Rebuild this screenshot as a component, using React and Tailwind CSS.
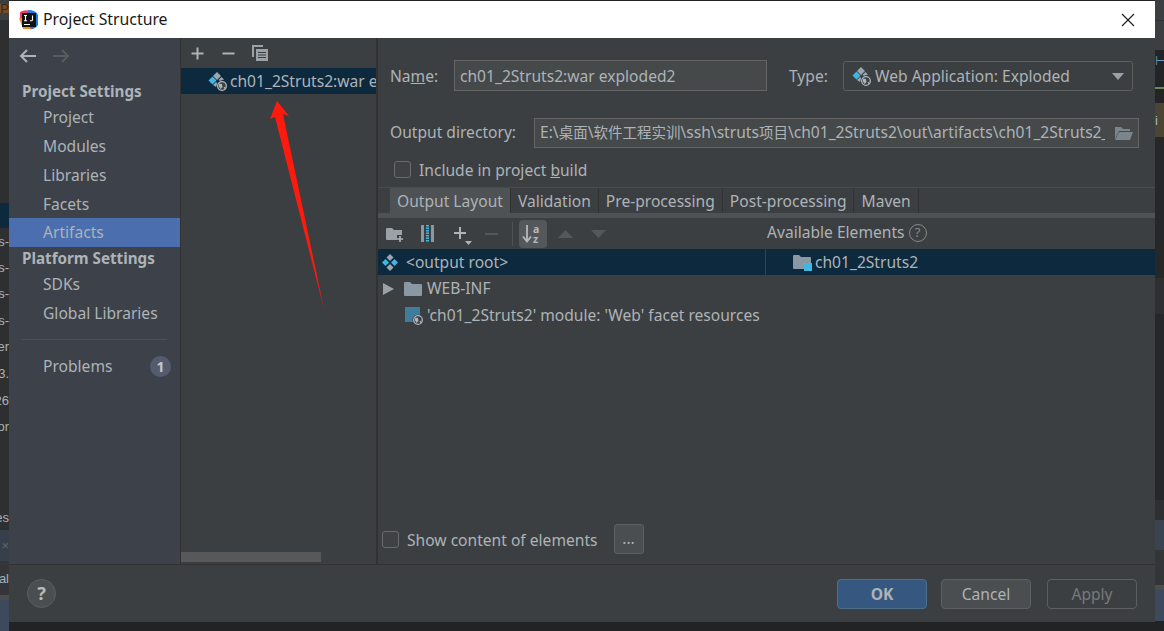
const leftStrip = [
  { h: 'h-[4px]', bg: 'bg-[#3c3f41]' },
  { h: 'h-[9px]', bg: 'bg-[#7a4a22]', text: 'P', tone: 'text-[#2b2b2b]' },
  { h: 'h-[7px]', bg: 'bg-[#3c3f41]' },
  { h: 'h-[183px]', bg: 'bg-[#2e2f30]' },
  { h: 'h-[25px]', bg: 'bg-[#0d293e]' },
  { h: 'h-[26px]', bg: 'bg-[#2e2f30]', text: 's-' },
  { h: 'h-[26px]', bg: 'bg-[#2e2f30]', text: 's-' },
  { h: 'h-[27px]', bg: 'bg-[#2e2f30]', text: 's-' },
  { h: 'h-[26px]', bg: 'bg-[#2e2f30]', text: 's-' },
  { h: 'h-[27px]', bg: 'bg-[#2e2f30]', text: 'er' },
  { h: 'h-[27px]', bg: 'bg-[#2e2f30]', text: '3.' },
  { h: 'h-[26px]', bg: 'bg-[#2e2f30]', text: '26' },
  { h: 'h-[26px]', bg: 'bg-[#2e2f30]', text: 'or' },
  { h: 'h-[65px]', bg: 'bg-[#2e2f30]' },
  { h: 'h-[26px]', bg: 'bg-[#2e2f30]', text: 'es' },
  { h: 'h-[31px]', bg: 'bg-[#37404a]', text: '×', tone: 'text-[#5d6670]' },
  { h: 'h-[34px]', bg: 'bg-[#333537]', text: 'al' },
  { h: 'h-[5px]', bg: 'bg-[#4a4c4e]' },
  { h: 'h-[32px]', bg: 'bg-[#3d4a5e]' },
  { h: 'h-[11px]', bg: 'bg-[#222324]' },
]

const rightStrip = [
  { h: 'h-[20px]', bg: 'bg-[#3c3f41]' },
  { h: 'h-[1px]', bg: 'bg-[#323232]' },
  { h: 'h-[29px]', bg: 'bg-[#3c3f41]' },
  { h: 'h-[20px]', bg: 'bg-[#232425]', text: '⊢', tone: 'text-[#6f97b8]' },
  { h: 'h-[17px]', bg: 'bg-[#232425]' },
  { h: 'h-[2px]', bg: 'bg-[#6a8759]' },
  { h: 'h-[14px]', bg: 'bg-[#232425]' },
  { h: 'h-[34px]', bg: 'bg-[#4a4535]', text: 'i', tone: 'text-[#a9b7c6]' },
  { h: 'h-[141px]', bg: 'bg-[#262728]' },
  { h: 'h-[36px]', bg: 'bg-[#2e2f30]' },
  { h: 'h-[186px]', bg: 'bg-[#262728]' },
  { h: 'h-[20px]', bg: 'bg-[#2e2f30]' },
  { h: 'h-[30px]', bg: 'bg-[#3a4350]' },
  { h: 'h-[35px]', bg: 'bg-[#333537]' },
  { h: 'h-[5px]', bg: 'bg-[#4a4c4e]' },
  { h: 'h-[31px]', bg: 'bg-[#3d4a5e]' },
  { h: 'h-[10px]', bg: 'bg-[#222324]' },
]

function Strip({ rows, align = 'justify-end' }) {
  return (
    <div className="w-[9px] shrink-0 overflow-hidden font-['Liberation_Sans',sans-serif] text-[13px]">
      {rows.map((row, i) => (
        <div key={i} className={`${row.h} ${row.bg} ${row.tone || 'text-[#a9b1b8]'} ${align} flex items-center whitespace-nowrap leading-none`}>
          {row.text}
        </div>
      ))}
    </div>
  )
}

function IdeaLogo() {
  return (
    <svg width="20" height="20" viewBox="0 0 20 20">
      <path d="M1 2 Q6 -1 11 1 L9 10 L1 9 Z" fill="#f0386b" />
      <path d="M9 0 Q17 0 19 5 L19 15 Q16 20 10 19 Z" fill="#1f7fe0" />
      <path d="M0 8 L5 8 L12 19 L4 19 Z" fill="#f58a1f" />
      <rect x="3" y="3" width="14" height="14" fill="#111" />
      <rect x="5" y="14" width="6" height="1" fill="#fff" />
      <path d="M5 5.5h3M6.5 5.5v5.2M5 10.7h3M13.5 5.5v4.2q0 1-1.2 1h-1.4" stroke="#fff" strokeWidth="1.1" fill="none" />
    </svg>
  )
}

function ArtifactIcon() {
  return (
    <svg width="18" height="18" viewBox="0 0 18 18" className="shrink-0">
      <path d="M4.5 5 L8 8.5 L4.5 12 L1 8.5 Z" fill="#40b6e0" />
      <path d="M9 0 L12.5 3.5 L9 7 L5.5 3.5 Z" fill="#9aa7b0" />
      <path d="M13.5 5 L17 8.5 L13.5 12 L10 8.5 Z" fill="#40b6e0" />
      <path d="M9 10 L12.5 13.5 L9 17 L5.5 13.5 Z" fill="#9aa7b0" />
    </svg>
  )
}

function Globe({ x = 0, y = 0 }) {
  return (
    <g transform={`translate(${x} ${y})`}>
      <circle cx="5" cy="5" r="5.5" fill="#3c3f41" />
      <circle cx="5" cy="5" r="4.3" fill="none" stroke="#aab4bb" strokeWidth="1.3" />
      <path d="M2 2.5 L5 3 L5.5 6 L3.5 8 L2 5.5 Z M6.5 6.5 L8.5 5.5 L7.5 8.5 Z" fill="#aab4bb" />
    </g>
  )
}

function WebArtifactIcon() {
  return (
    <svg width="20" height="20" viewBox="0 0 20 20" className="shrink-0">
      <path d="M4.5 4.5 L8.5 8.5 L4.5 12.5 L0.5 8.5 Z" fill="#40b6e0" />
      <path d="M9 0 L13 4 L9 8 L5 4 Z" fill="#9aa7b0" />
      <path d="M13.5 5 L16 7.5 L12 9 L10.5 8 Z" fill="#9aa7b0" />
      <path d="M8 10 L10 12 L8 15 L5 13 Z" fill="#9aa7b0" />
      <Globe x={9} y={9} />
    </svg>
  )
}

function FolderIcon({ className = '' }) {
  return (
    <svg width="18" height="14" viewBox="0 0 18 14" className={className}>
      <path d="M0 1 Q0 0 1 0 H6 L8 2 H17 Q18 2 18 3 V13 Q18 14 17 14 H1 Q0 14 0 13 Z" fill="#8a98a3" />
    </svg>
  )
}

function Check() {
  return <div className="w-[17px] h-[17px] shrink-0 rounded-[3px] border border-[#6b6b6b] bg-[#3f4244]" />
}

function SideItem({ label, active }) {
  return (
    <div className={`h-[28.75px] pl-[34px] pt-[1.5px] flex items-center ${active ? 'bg-[#4b6eaf]' : ''}`}>{label}</div>
  )
}

function SideHeader({ label, className = '' }) {
  return <div className={`pl-[13px] flex items-center font-bold text-[15.2px] ${className}`}>{label}</div>
}

function TabItem({ label, active }) {
  return (
    <div className={`h-[25px] px-[7px] pt-[2px] flex items-center border-r border-[#323232] ${active ? 'bg-[#4e5254]' : ''}`}>{label}</div>
  )
}

function Button({ label, className = '' }) {
  return (
    <div className={`w-[90px] h-[30px] pt-[3px] rounded-[4px] border flex items-center justify-center ${className}`}>{label}</div>
  )
}

export default function App() {
  return (
    <div className="relative w-[1164px] h-[631px] overflow-hidden flex bg-[#222324] font-['Noto_Sans','Noto_Sans_CJK_SC',sans-serif] text-[15.6px] text-[#adb3b7]">
      <Strip rows={leftStrip} />

      <div className="w-[1146px] shrink-0 mt-px h-[621px] flex flex-col bg-[#3c3f41]">
        {/* title bar */}
        <div className="h-[37px] shrink-0 bg-white text-[#1a1a1a] flex items-center pl-[10px] pr-[20px]">
          <IdeaLogo />
          <span className="ml-[4px] text-[15.8px]">Project Structure</span>
          <svg width="14" height="14" viewBox="0 0 14 14" className="ml-auto">
            <path d="M1 1 L13 13 M13 1 L1 13" stroke="#1a1a1a" strokeWidth="1.1" />
          </svg>
        </div>

        <div className="flex-1 flex min-h-0">
          {/* sidebar */}
          <div className="w-[171px] shrink-0 bg-[#3d4149] flex flex-col">
            <div className="h-[36px] pl-[10px] pt-[9px] flex gap-[15px] items-start">
              <svg width="18" height="18" viewBox="0 0 18 18">
                <path d="M17 9 H2 M8 3 L2 9 L8 15" stroke="#adb3b7" strokeWidth="2" fill="none" />
              </svg>
              <svg width="18" height="18" viewBox="0 0 18 18">
                <path d="M1 9 H16 M10 3 L16 9 L10 15" stroke="#5a5d60" strokeWidth="2" fill="none" />
              </svg>
            </div>
            <SideHeader label="Project Settings" className="h-[29px] pt-[5px]" />
            <SideItem label="Project" />
            <SideItem label="Modules" />
            <SideItem label="Libraries" />
            <SideItem label="Facets" />
            <SideItem label="Artifacts" active />
            <SideHeader label="Platform Settings" className="h-[23px]" />
            <SideItem label="SDKs" />
            <SideItem label="Global Libraries" />
            <div className="mt-[12px] mx-[13px] h-px bg-[#4c4f54]" />
            <div className="mt-[12px] h-[29px] pl-[34px] pr-[9px] flex items-center justify-between">
              <span>Problems</span>
              <span className="w-[21px] h-[21px] rounded-full bg-[#555b6e] text-[#c5c9cc] font-bold flex items-center justify-center text-[14px]">1</span>
            </div>
          </div>

          {/* artifact list */}
          <div className="w-[197px] shrink-0 border-x border-[#323232] flex flex-col">
            <div className="h-[30px] shrink-0 pl-[9px] flex items-center gap-[16px]">
              <svg width="15" height="15" viewBox="0 0 15 15">
                <path d="M7.5 1.5 V13.5 M1.5 7.5 H13.5" stroke="#adb3b7" strokeWidth="2" />
              </svg>
              <svg width="15" height="15" viewBox="0 0 15 15">
                <path d="M1.5 7.5 H13.5" stroke="#adb3b7" strokeWidth="2" />
              </svg>
              <svg width="17" height="17" viewBox="0 0 17 17">
                <path d="M1 12 V1 H11" stroke="#9aa2a8" strokeWidth="2" fill="none" />
                <rect x="4" y="4" width="12" height="12" fill="#9aa2a8" />
                <path d="M6 7.5 H14 M6 10 H14 M6 12.5 H14" stroke="#3c3f41" strokeWidth="1" />
              </svg>
            </div>
            <div className="h-[26px] shrink-0 bg-[#0d293e] pl-[27px] pt-[2px] flex items-center overflow-hidden whitespace-nowrap">
              <WebArtifactIcon />
              <span className="ml-[2px]">ch01_2Struts2:war exploded2</span>
            </div>
            <div className="flex-1" />
            <div className="h-[10px] w-[140px] bg-[#565859] mb-[2px]" />
          </div>

          {/* artifact form */}
          <div className="flex-1 min-w-0 border-l border-[#323232] flex flex-col">
            <div className="mt-[22px] pl-[12px] pt-[2px] flex items-center h-[31px]">
              <span className="w-[64px]">Na<span className="underline">m</span>e:</span>
              <div className="w-[313px] h-[31px] -mt-[2px] pt-[2px] bg-[#45494a] border border-[#646464] pl-[5px] flex items-center">ch01_2Struts2:war exploded2</div>
              <span className="ml-[22px] w-[54px]">Type:</span>
              <div className="w-[290px] h-[30px] -mt-[2px] pt-[2px] rounded-[3px] bg-[#3c3f41] border border-[#5e6060] pl-[8px] pr-[8px] flex items-center">
                <WebArtifactIcon />
                <span className="ml-[3px]">Web Application: Exploded</span>
                <svg width="12" height="8" viewBox="0 0 12 8" className="ml-auto">
                  <path d="M0 0 H12 L6 7 Z" fill="#9aa2a8" />
                </svg>
              </div>
            </div>

            <div className="mt-[27px] pl-[12px] flex items-center h-[30px]">
              <span className="w-[144px]">Output directory:</span>
              <div className="w-[605px] h-[30px] bg-[#45494a] border border-[#646464] pl-[5px] pr-[5px] flex items-center">
                <span className="flex-1 min-w-0 overflow-hidden whitespace-nowrap">E:\<span className="text-[14.5px]">桌面</span>\<span className="text-[14.5px]">软件工程实训</span>\ssh\struts<span className="text-[14.5px]">项目</span>\ch01_2Struts2\out\artifacts\ch01_2Struts2_war_exploded2</span>
                <svg width="18" height="14" viewBox="0 0 18 14" className="ml-[10px] shrink-0">
                  <path d="M0 13 V1 H6 L8 3 H15 V5 H4 Z" fill="#7a858c" />
                  <path d="M4 6 H18 L15 14 H0 Z" fill="#7a858c" />
                </svg>
              </div>
            </div>

            <div className="mt-[13px] pl-[16px] flex items-center gap-[8px] h-[17px]">
              <Check />
              <span className="pt-[2px]">Include in project <span className="underline">b</span>uild</span>
            </div>

            <div className="mt-[9px] border-t border-[#484a4c] pl-[12px] flex">
              <TabItem label="Output Layout" active />
              <TabItem label="Validation" />
              <TabItem label="Pre-processing" />
              <TabItem label="Post-processing" />
              <TabItem label="Maven" />
            </div>
            <div className="h-[5px] shrink-0 bg-[#4e5254]" />

            {/* output layout tree */}
            <div className="flex-1 flex min-h-0">
              <div className="w-[387px] shrink-0 flex flex-col">
                <div className="h-[31px] shrink-0 pl-[8px] flex items-center">
                  <svg width="18" height="16" viewBox="0 0 18 16">
                    <path d="M0 3 Q0 2 1 2 H6 L8 4 H16 V9 H11 V14 H1 Q0 14 0 13 Z" fill="#9aa2a8" />
                    <path d="M14 10 V16 M11 13 H17" stroke="#adb3b7" strokeWidth="1.6" />
                  </svg>
                  <svg width="13" height="17" viewBox="0 0 13 17" className="ml-[17px]">
                    <rect width="3" height="17" fill="#8a98a3" />
                    <rect x="10" width="3" height="17" fill="#8a98a3" />
                    <path d="M6.5 0 V17" stroke="#40b6e0" strokeWidth="3" strokeDasharray="1.5 1" />
                  </svg>
                  <svg width="22" height="20" viewBox="0 0 22 20" className="ml-[18px] mt-[3px]">
                    <path d="M8 2 V14 M2 8 H14" stroke="#adb3b7" strokeWidth="2" />
                    <path d="M13 16 H20 L16.5 20 Z" fill="#adb3b7" />
                  </svg>
                  <svg width="13" height="4" viewBox="0 0 13 4" className="ml-[11px]">
                    <path d="M0 2 H13" stroke="#55585a" strokeWidth="2" />
                  </svg>
                  <div className="ml-[14px] w-px h-[24px] bg-[#505355]" />
                  <div className="ml-[6px] w-[28px] h-[28px] rounded-[4px] bg-[#54585b] flex items-center justify-center">
                    <svg width="22" height="20" viewBox="0 0 22 20">
                      <path d="M5 1 V17 M1 12.5 L5 17.5 L9 12.5" stroke="#b4babe" strokeWidth="1.8" fill="none" />
                      <text x="11" y="8.5" fill="#b4babe" fontSize="10.5" fontWeight="700">a</text>
                      <text x="11" y="18.5" fill="#b4babe" fontSize="10.5" fontWeight="700">z</text>
                    </svg>
                  </div>
                  <svg width="15" height="8" viewBox="0 0 15 8" className="ml-[11px]">
                    <path d="M0 8 H15 L7.5 0 Z" fill="#55585a" />
                  </svg>
                  <svg width="15" height="8" viewBox="0 0 15 8" className="ml-[18px]">
                    <path d="M0 0 H15 L7.5 8 Z" fill="#55585a" />
                  </svg>
                </div>
                <div className="h-[26px] shrink-0 bg-[#0d293e] pl-[3px] pt-[2px] flex items-center">
                  <ArtifactIcon />
                  <span className="ml-[7px]">&lt;output root&gt;</span>
                </div>
                <div className="h-[27px] shrink-0 pl-[5px] flex items-center">
                  <svg width="11" height="12" viewBox="0 0 11 12">
                    <path d="M0 0 L11 6 L0 12 Z" fill="#9aa2a8" />
                  </svg>
                  <FolderIcon className="ml-[10px]" />
                  <span className="ml-[5px]">WEB-INF</span>
                </div>
                <div className="h-[26px] shrink-0 pl-[27px] pt-[2px] flex items-center">
                  <svg width="18" height="18" viewBox="0 0 18 18">
                    <rect width="15" height="15" fill="#3f7d9c" />
                    <Globe x={8} y={8} />
                  </svg>
                  <span className="ml-[4px]">'ch01_2Struts2' module: 'Web' facet resources</span>
                </div>
              </div>

              <div className="flex-1 min-w-0 flex flex-col">
                <div className="h-[31px] shrink-0 pl-[2px] pb-[2px] flex items-center gap-[4px]">
                  <span>Available Elements</span>
                  <span className="w-[18px] h-[18px] rounded-full border border-[#85898c] text-[#85898c] text-[13px] flex items-center justify-center">?</span>
                </div>
                <div className="h-[26px] shrink-0 bg-[#0d293e] border-l border-[#3c3f41] pl-[27px] pt-[2px] flex items-center">
                  <div className="relative w-[19px] h-[16px]">
                    <FolderIcon />
                    <div className="absolute right-0 bottom-0 w-[8px] h-[8px] bg-[#40b6e0]" />
                  </div>
                  <span className="ml-[3px]">ch01_2Struts2</span>
                </div>
              </div>
            </div>

            <div className="h-[30px] shrink-0 mb-[10px] pl-[4px] flex items-center">
              <Check />
              <span className="ml-[8px] pt-[3px]">Show content of elements</span>
              <div className="ml-[16px] w-[30px] h-[30px] rounded-[3px] bg-[#4a4e50] border border-[#5e6060] flex items-center justify-center">...</div>
            </div>
          </div>
        </div>

        {/* footer */}
        <div className="h-[58px] shrink-0 border-t border-[#323232] pl-[18px] pr-[18px] flex items-center">
          <div className="w-[29px] h-[29px] rounded-full bg-[#4a4e50] border border-[#5a5e60] text-[#b4babe] font-bold text-[18px] flex items-center justify-center">?</div>
          <Button label="OK" className="ml-auto bg-[#365880] border-[#4c708c] font-bold" />
          <Button label="Cancel" className="ml-[14px] bg-[#4a4e50] border-[#5e6060]" />
          <Button label="Apply" className="ml-[16px] border-[#5e6060] text-[#777a7c]" />
        </div>
      </div>

      <Strip rows={rightStrip} align="justify-start" />

      {/* red annotation arrow drawn over the screenshot */}
      <svg className="absolute inset-0 pointer-events-none" width="1164" height="631" viewBox="0 0 1164 631">
        <polygon points="277,101 289,116 283,114 324,309 275,117 270,119" fill="#ff1a0d" />
      </svg>
    </div>
  )
}
